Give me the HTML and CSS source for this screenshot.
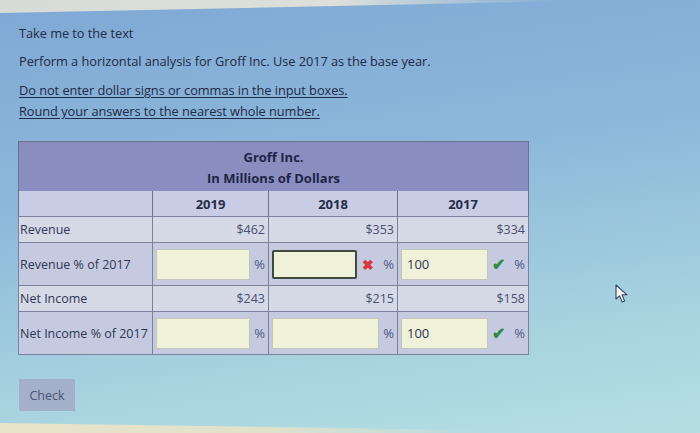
FILE: index.html
```html
<!DOCTYPE html>
<html lang="en">
<head>
    <meta charset="UTF-8">
    <title>Horizontal Analysis</title>
    <link rel="stylesheet" href="styles.css">
</head>
<body>
    <div class="glare-top"></div>
    <div class="glare-bottom"></div>

    <div class="page">
        <p class="intro">Take me to the text</p>
        <p class="intro">Perform a horizontal analysis for Groff Inc. Use 2017 as the base year.</p>
        <div class="notes">
            <p>Do not enter dollar signs or commas in the input boxes.</p>
            <p>Round your answers to the nearest whole number.</p>
        </div>

        <table class="grid">
            <colgroup>
                <col class="c-label">
                <col class="c-2019">
                <col class="c-2018">
                <col class="c-2017">
            </colgroup>
            <tr class="title-row">
                <th colspan="4">Groff Inc.<br>In Millions of Dollars</th>
            </tr>
            <tr class="year-row">
                <th></th>
                <th>2019</th>
                <th>2018</th>
                <th>2017</th>
            </tr>
            <tr class="value-row">
                <td class="label">Revenue</td>
                <td class="num">$462</td>
                <td class="num">$353</td>
                <td class="num">$334</td>
            </tr>
            <tr class="pct-row">
                <td class="label">Revenue % of 2017</td>
                <td><div class="cell"><span class="box"></span><span class="pct">%</span></div></td>
                <td><div class="cell"><span class="box focused"></span><span class="mark wrong">&#10006;</span><span class="pct">%</span></div></td>
                <td><div class="cell"><span class="box">100</span><span class="mark right">&#10004;</span><span class="pct">%</span></div></td>
            </tr>
            <tr class="value-row">
                <td class="label">Net Income</td>
                <td class="num">$243</td>
                <td class="num">$215</td>
                <td class="num">$158</td>
            </tr>
            <tr class="pct-row">
                <td class="label">Net Income % of 2017</td>
                <td><div class="cell"><span class="box"></span><span class="pct">%</span></div></td>
                <td><div class="cell"><span class="box"></span><span class="pct">%</span></div></td>
                <td><div class="cell"><span class="box">100</span><span class="mark right">&#10004;</span><span class="pct">%</span></div></td>
            </tr>
        </table>

        <button class="btn-check">Check</button>
    </div>

    <svg class="cursor" width="14" height="20" viewBox="0 0 14 20">
        <path d="M1 1 L1 15 L4.5 11.8 L7.2 18 L9.6 17 L7 10.8 L12 10.8 Z" fill="#f4f8fb" stroke="#3a4454" stroke-width="1.1" stroke-linejoin="round"/>
    </svg>
</body>
</html>
```

FILE: styles.css
```css
body {
    margin: 0;
    width: 700px;
    height: 433px;
    overflow: hidden;
    position: relative;
    font-family: "Open Sans", "Noto Sans", sans-serif;
    color: #1f2a44;
    background: linear-gradient(172deg, #7fa8d5 0%, #8db8da 40%, #a6d2df 75%, #b6dfe3 100%);
}
.glare-top {
    position: absolute;
    left: 0;
    top: 0;
    width: 560px;
    height: 13px;
    background: linear-gradient(90deg, #d8dcd6 0%, #dde0da 60%, rgba(220,224,222,0) 100%);
    clip-path: polygon(0 0, 100% 0, 100% 10%, 0 100%);
}
.glare-bottom {
    position: absolute;
    left: 0;
    bottom: 0;
    width: 480px;
    height: 10px;
    background: linear-gradient(90deg, #e6e4c8 0%, #e2e2cc 55%, rgba(200,225,225,0) 100%);
    clip-path: polygon(0 0, 100% 70%, 100% 100%, 0 100%);
}
.page {
    padding: 25px 0 0 19px;
}
.intro {
    margin: 0 0 11px 0;
    font-size: 12.8px;
    line-height: 17px;
    letter-spacing: -0.05px;
}
.notes {
    margin-top: 12px;
}
.notes p {
    margin: 0 0 4px 0;
    font-size: 12.8px;
    line-height: 17px;
    letter-spacing: -0.05px;
    text-decoration: underline;
    text-underline-offset: 2px;
}
.grid {
    margin: 21px 0 0 -1px;
    width: 511px;
    border-collapse: collapse;
    table-layout: fixed;
    font-size: 12.5px;
    border: 1px solid #6b7390;
}
.c-label { width: 134px; }
.c-2019 { width: 116px; }
.c-2018 { width: 129px; }
.c-2017 { width: 131px; }
.grid td {
    border: 1px solid #7a819a;
    padding: 0 3px;
}
.title-row th {
    background: #898dc0;
    height: 46px;
    font-size: 13px;
    line-height: 21px;
    color: #1f2546;
    padding: 3px 0 0 0;
}
.year-row th {
    background: #c8cce4;
    height: 25px;
    padding: 0;
    font-size: 13px;
    color: #262c48;
    border-left: 1px solid #6b7390;
}
.year-row th:first-child {
    border-left: none;
}
.value-row td {
    background: #d6d9e6;
    height: 25px;
}
.pct-row td {
    background: #c5cae0;
    height: 42px;
}
.label {
    color: #2f3857;
    white-space: nowrap;
    padding-left: 1px !important;
}
.num {
    text-align: right;
    color: #485170;
}
.cell {
    display: flex;
    align-items: center;
    gap: 3px;
}
.box {
    flex: 1;
    height: 31px;
    box-sizing: border-box;
    background: #eff1d8;
    border: 1px solid #c4c6b8;
    border-radius: 1px;
    padding-left: 5px;
    line-height: 29px;
    font-size: 13px;
    color: #2b3350;
}
.box.focused {
    height: 29px;
    border: 2px solid #3e4a40;
    border-radius: 2px;
}
.mark {
    width: 15px;
    text-align: center;
    font-size: 14px;
    font-weight: bold;
}
.wrong {
    color: #d6383c;
}
.right {
    color: #2b8c42;
    font-size: 16px;
}
.pct {
    width: 12px;
    text-align: right;
    color: #4d5a82;
    font-size: 13px;
}
.mark + .pct {
    width: 16px;
}
.btn-check {
    margin-top: 24px;
    width: 56px;
    height: 32px;
    border: none;
    background: #a4afca;
    color: #4a5474;
    font-family: "Open Sans", "Noto Sans", sans-serif;
    font-size: 12.5px;
    padding: 0;
}
.cursor {
    position: absolute;
    left: 615px;
    top: 284px;
}
```
